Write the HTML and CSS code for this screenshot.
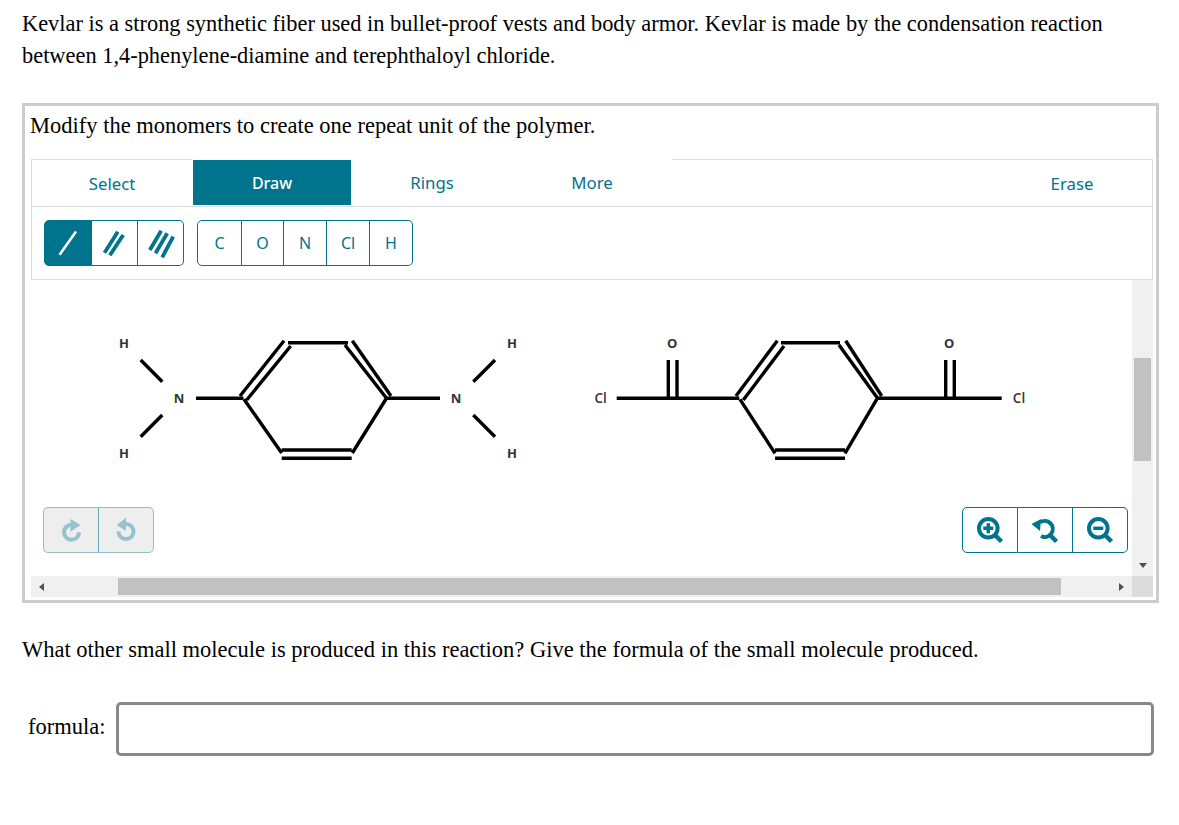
FILE: index.html
```html
<!DOCTYPE html>
<html lang="en">
<head>
<meta charset="utf-8">
<title>Kevlar question</title>
<link rel="stylesheet" href="styles.css">
</head>
<body>
<p class="intro">Kevlar is a strong synthetic fiber used in bullet-proof vests and body armor. Kevlar is made by the condensation reaction between 1,4-phenylene-diamine and terephthaloyl chloride.</p>
<section class="frame">
  <h2 class="prompt">Modify the monomers to create one repeat unit of the polymer.</h2>
  <div class="editor">
    <nav class="tabs">
      <div class="tab lined">Select</div>
      <div class="tab active">Draw</div>
      <div class="tab open">Rings</div>
      <div class="tab open">More</div>
      <div class="tab-fill lined"></div>
      <div class="tab lined">Erase</div>
    </nav>
    <div class="tools">
      <div class="group bonds">
        <button class="btn bond on"><svg width="20" height="26" viewBox="0 0 20 26"><path d="M18 1.500 1.600 24.800" class="wline"/></svg></button>
        <button class="btn bond"><svg width="20" height="26" viewBox="0 0 20 26"><path d="M-.5 22.700 12.800 1.700M4.800 25.300 18.200 5" class="tline"/></svg></button>
        <button class="btn bond"><svg width="26" height="28" viewBox="0 0 26 28"><path d="M1.800 21 13.200 1.700M7.500 24.300 19.200 4.300M14.200 28.300 25.200 7.700" class="tline"/></svg></button>
      </div>
      <div class="group atoms">
        <button class="btn atom a1">C</button>
        <button class="btn atom a2">O</button>
        <button class="btn atom a3">N</button>
        <button class="btn atom a4">Cl</button>
        <button class="btn atom a5">H</button>
      </div>
    </div>
    <div class="canvas">
      <div class="view">
        <svg class="mol" width="1101" height="296" viewBox="31 280 1101 296">
          <g class="bonds-g">
            <path d="M196 398.300H243.500M386.700 398.300H440M140.700 360 162.300 381.700M162.300 415 140.700 436.700M495 360 473.300 381.700M473.300 415 495 436.700"/>
            <path d="M240 396 284 340.700M246.700 400 290.700 346M288 342.700H348M345 345 387.300 399.300M352.300 340.700 391 396M244 399.300 281.700 453M386 399 352.300 453M281.700 450H351.700M281.700 458.300H351.700"/>
            <path d="M616.700 398.300H739.300M877.700 398.300H1001.700M668.300 360V398M677 360V398M945.700 360V398M954.300 360V398"/>
            <path d="M736 396 777.300 340.700M743.300 400 784 346M781 342.700H840M839 345 878.300 399.300M845.700 340.700 881.700 396M740 399.300 775 453.300M876.700 399.300 845 453.300M775 450H845M775 458.300H845"/>
          </g>
          <g class="labels">
            <text x="124" y="347.500">H</text><text x="124" y="458">H</text><text x="179" y="403">N</text>
            <text x="456" y="403">N</text><text x="512" y="347.500">H</text><text x="512" y="458">H</text>
            <text x="672.300" y="347.500">O</text><text x="949.300" y="347.500">O</text>
            <text class="chlorine" x="600.700" y="403">Cl</text><text class="chlorine" x="1019" y="403">Cl</text>
          </g>
        </svg>
        <div class="group history">
          <button class="btn hist"><svg width="24" height="24" viewBox="0 0 24 24"><path d="M20 14.300A7.500 7.500 0 1 1 12.500 6.800" class="ring"/><path d="M11.500 1 21.500 7 11.500 13.700Z" class="fill"/></svg></button>
          <button class="btn hist"><svg width="24" height="24" viewBox="0 0 24 24"><path d="M4.500 13.500A7.500 7.500 0 1 0 12 6" class="ring"/><path d="M12 -.3 2.700 7 12 13Z" class="fill"/></svg></button>
        </div>
        <div class="group zoom">
          <button class="btn zm"><svg width="28" height="28" viewBox="0 0 28 28"><circle cx="12.300" cy="12.300" r="9.300" class="lens"/><path d="M19 19 25.500 25.500" class="handle"/><path d="M12.300 7.300V17.300M7.300 12.300H17.300" class="mark"/></svg></button>
          <button class="btn zm"><svg width="28" height="28" viewBox="0 0 28 28"><path d="M9 6.500A8 8 0 1 1 10 20" class="lens"/><path d="M.5 8 10 3 9 15Z" class="fill"/><path d="M19 19 25.500 25.500" class="handle"/></svg></button>
          <button class="btn zm"><svg width="28" height="28" viewBox="0 0 28 28"><circle cx="12.300" cy="12.300" r="9.300" class="lens"/><path d="M19 19 25.500 25.500" class="handle"/><path d="M7.300 12.300H17.300" class="mark"/></svg></button>
        </div>
      </div>
      <div class="vbar"><div class="vthumb"></div><span class="arrow down"></span></div>
      <div class="hbar"><span class="arrow left"></span><div class="hthumb"></div><span class="arrow right"></span></div>
      <div class="corner"></div>
    </div>
  </div>
</section>
<p class="question">What other small molecule is produced in this reaction? Give the formula of the small molecule produced.</p>
<div class="answer">
  <label class="answer-label" for="formula">formula:</label>
  <input class="answer-input" id="formula" type="text">
</div>
</body>
</html>
```
FILE: styles.css
```css
* { box-sizing: border-box; }
html, body { margin: 0; padding: 0; }
body {
  width: 1179px;
  height: 825px;
  overflow: hidden;
  background: #fff;
  color: #000;
  font-family: "Liberation Serif", serif;
  font-size: 22.500px;
}
.intro {
  margin: 0;
  padding: 8px 60px 0 22px;
  font-size: 22.400px;
  line-height: 32px;
  height: 103px;
}
.frame {
  margin-left: 22px;
  width: 1137px;
  height: 500px;
  border: 3px solid #ccc;
}
.prompt {
  margin: 0;
  padding: 6px 0 0 5px;
  height: 53px;
  font-size: 22.500px;
  font-weight: 400;
  line-height: 28px;
}
.editor {
  margin-left: 6px;
  width: 1122px;
  font-family: "Noto Sans", sans-serif;
  font-size: 16.800px;
  color: #00748c;
}
.tabs {
  display: flex;
  height: 48px;
  border-left: 1px solid #ddd;
  border-right: 1px solid #ddd;
  border-bottom: 1px solid #ddd;
}
.tab {
  width: 160px;
  display: flex;
  align-items: center;
  justify-content: center;
}
.tab.lined, .tab-fill.lined { border-top: 1px solid #ddd; }
.tab.open { padding-bottom: 1px; }
.tab-fill { flex: 1; }
.tab.active {
  width: 158px;
  margin: 1px;
  background: #00748c;
  color: #fff;
  font-size: 16px;
  font-weight: 500;
}
.tools {
  display: flex;
  gap: 13px;
  height: 73px;
  padding: 13px 12px;
  border-left: 1px solid #ddd;
  border-right: 1px solid #ddd;
  border-bottom: 1px solid #ddd;
}
.group { display: flex; height: 46px; }
.btn {
  display: flex;
  align-items: center;
  justify-content: center;
  height: 46px;
  padding: 0;
  background: #fff;
  border: 1px solid #00748c;
  border-left-width: 0;
  color: #00748c;
  font-family: inherit;
  font-size: 16px;
}
.btn svg { overflow: visible; }
.btn:first-child { border-left-width: 1px; border-radius: 5px 0 0 5px; }
.btn:last-child { border-radius: 0 5px 5px 0; }
.bond { width: 46px; }
.bond.on { width: 48px; background: #00748c; }
.atom { width: 43px; }
.a1 { width: 45px; }
.a2 { width: 42px; }
.wline, .tline { fill: none; }
.wline { stroke: #fff; stroke-width: 2.500px; }
.tline { stroke: #00748c; stroke-width: 3.800px; }
.canvas {
  display: grid;
  grid-template-columns: 1101px 21px;
  grid-template-rows: 296px 21px;
}
.view { position: relative; overflow: hidden; }
.mol { display: block; }
.bonds-g path { fill: none; stroke: #000; stroke-width: 3.400px; }
.labels text {
  font-family: "Open Sans", sans-serif;
  font-size: 13px;
  font-weight: 700;
  fill: #333;
  text-anchor: middle;
}
.labels .chlorine { font-size: 13.500px; font-weight: 600; }
.history { position: absolute; left: 12px; top: 227px; }
.zoom { position: absolute; left: 931px; top: 227px; }
.hist { width: 56px; background: #eee; border-color: #8fc0cb; }
.hist:first-child { width: 55px; border-right-width: 0; }
.hist:last-child { border-left-width: 1px; border-left-color: #5fa6b6; }
.hist .ring { fill: none; stroke: #94c2cd; stroke-width: 4px; }
.hist .fill { fill: #94c2cd; }
.zm { width: 55px; }
.zm:first-child { width: 56px; }
.lens, .handle, .mark { fill: none; stroke: #00748c; }
.lens { stroke-width: 4px; }
.handle { stroke-width: 4.500px; }
.mark { stroke-width: 3.500px; }
.zm .fill { fill: #00748c; }
.vbar {
  display: flex;
  flex-direction: column;
  align-items: center;
  background: #f0f0f0;
}
.vthumb { width: 17px; height: 103px; margin-top: 78px; background: #c1c1c1; }
.hbar {
  display: flex;
  align-items: center;
  padding-left: 8px;
  background: #f0f0f0;
}
.hthumb { width: 943px; height: 17px; margin-left: 74px; background: #c1c1c1; }
.corner { background: #dcdcdc; }
.arrow { display: block; width: 0; height: 0; border-style: solid; border-color: transparent; }
.arrow.left { border-width: 4px 5px 4px 0; border-right-color: #505050; width: 5px; }
.arrow.right { border-width: 4px 0 4px 5px; border-left-color: #505050; margin-left: 58px; }
.arrow.down { border-width: 5px 4px 0 4px; border-top-color: #505050; margin-top: 102px; }
.question {
  margin: 0;
  padding: 33px 0 0 22px;
  height: 99px;
  line-height: 28px;
}
.answer { display: flex; align-items: center; padding-left: 28px; }
.answer-label { width: 88px; margin-bottom: 4px; }
.answer-input {
  width: 1038px;
  height: 54px;
  border: 3px solid #888;
  border-radius: 5px;
  background: #fff;
}
```
